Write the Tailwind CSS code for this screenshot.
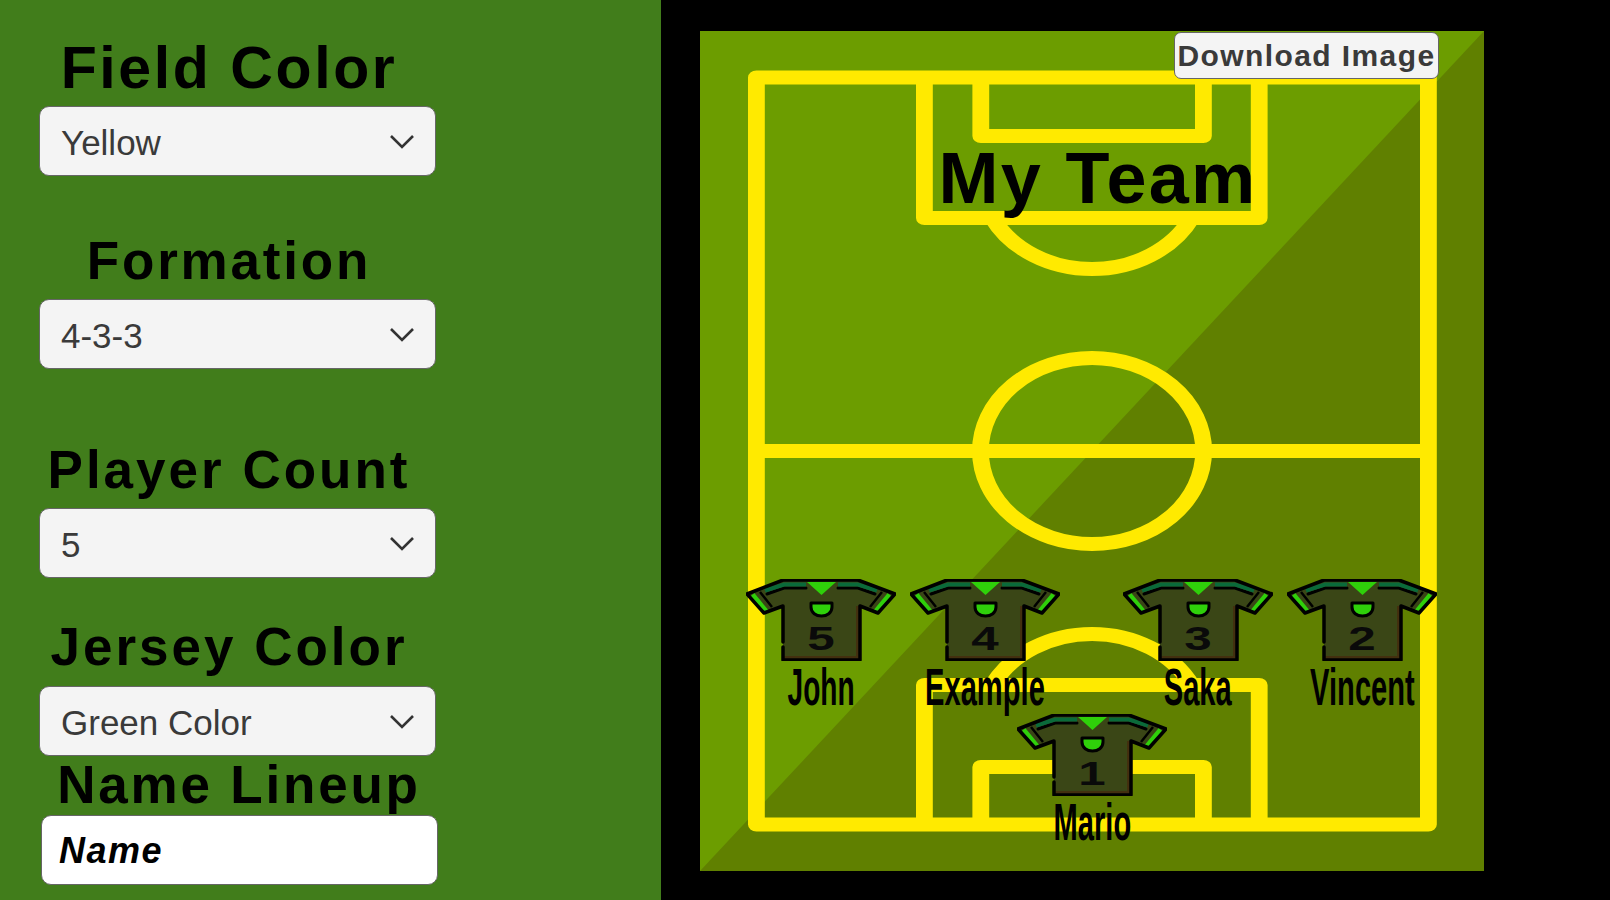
<!DOCTYPE html>
<html lang="en">
<head>
  <meta charset="UTF-8">
  <title>Lineup Builder</title>
  <script src="https://cdn.jsdelivr.net/npm/@tailwindcss/browser@4"></script>
</head>
<body class="h-screen overflow-hidden bg-black font-['Liberation_Sans',Arial,sans-serif]">

  <!-- Shared jersey drawing -->
  <svg class="hidden">
    <symbol id="jersey" viewBox="0 0 150 82">
      <path d="M37 1H112L149 15L132 33L114 27V81H37V27L18 33L1 15Z" fill="#3a4616"/>
      <path d="M110 27H114V81H37V77H110Z" fill="#43300f"/>
      <path d="M61 3H90L75.500 16Z" fill="#2fd00a"/>
      <path d="M21 15L38 9H60M92 9H112L129 15" fill="none" stroke="#000" stroke-width="3" stroke-linecap="round"/>
      <path d="M19 11.500L38 5.500H60M92 5.500H112L131 11.500" fill="none" stroke="#0a6a3a" stroke-width="4"/>
      <path d="M6 16L20 33M144 16L130 33" stroke="#2fd00a" stroke-width="6"/>
      <path d="M14 13L26 28M136 13L124 28" stroke="#000" stroke-width="2.500"/>
      <path d="M37 63V27L18 34L1 15L37 1H112L149 15L132 34L114 27V81H37V68" fill="none" stroke="#000" stroke-width="3.500" stroke-linejoin="round" stroke-linecap="round"/>
      <path d="M65 24H86V28C86 34 81 37 75.500 37C70 37 65 34 65 28Z" fill="#2fd00a" stroke="#000" stroke-width="3" stroke-linejoin="round"/>
    </symbol>
  </svg>

  <div class="flex h-full">
    <!-- Left settings panel -->
    <div class="w-[661px] h-full shrink-0 bg-[#417d1b] pl-[39px] pt-[38px]">
      <div class="w-[380px] h-[60px] text-center text-[59px] leading-[60px] font-bold tracking-[2.6px] text-black whitespace-nowrap">Field Color</div>
      <div class="relative w-[397px] h-[70px] mt-[8px]">
        <select class="w-full h-full appearance-none rounded-[10px] border border-[#666] bg-[#f4f4f4] pl-[21px] pt-[5px] text-[35px] text-[#3a3a3a]"><option>Yellow</option></select>
        <svg class="absolute right-[22px] top-[29px] w-[24px] h-[14px]" viewBox="0 0 24 14" fill="none" stroke="#333" stroke-width="2.6"><path d="M1 1L12 12L23 1"/></svg>
      </div>

      <div class="w-[380px] h-[60px] mt-[55px] text-center text-[53px] leading-[60px] font-bold tracking-[2.8px] text-black whitespace-nowrap">Formation</div>
      <div class="relative w-[397px] h-[70px] mt-[8px]">
        <select class="w-full h-full appearance-none rounded-[10px] border border-[#666] bg-[#f4f4f4] pl-[21px] pt-[5px] text-[35px] text-[#3a3a3a]"><option>4-3-3</option></select>
        <svg class="absolute right-[22px] top-[29px] w-[24px] h-[14px]" viewBox="0 0 24 14" fill="none" stroke="#333" stroke-width="2.6"><path d="M1 1L12 12L23 1"/></svg>
      </div>

      <div class="w-[380px] h-[60px] mt-[71px] text-center text-[53px] leading-[60px] font-bold tracking-[3px] text-black whitespace-nowrap">Player Count</div>
      <div class="relative w-[397px] h-[70px] mt-[8px]">
        <select class="w-full h-full appearance-none rounded-[10px] border border-[#666] bg-[#f4f4f4] pl-[21px] pt-[5px] text-[35px] text-[#3a3a3a]"><option>5</option></select>
        <svg class="absolute right-[22px] top-[29px] w-[24px] h-[14px]" viewBox="0 0 24 14" fill="none" stroke="#333" stroke-width="2.6"><path d="M1 1L12 12L23 1"/></svg>
      </div>

      <div class="w-[380px] h-[60px] mt-[39px] text-center text-[53px] leading-[60px] font-bold tracking-[3px] text-black whitespace-nowrap">Jersey Color</div>
      <div class="relative w-[397px] h-[70px] mt-[9px]">
        <select class="w-full h-full appearance-none rounded-[10px] border border-[#666] bg-[#f4f4f4] pl-[21px] pt-[5px] text-[35px] text-[#3a3a3a]"><option>Green Color</option></select>
        <svg class="absolute right-[22px] top-[29px] w-[24px] h-[14px]" viewBox="0 0 24 14" fill="none" stroke="#333" stroke-width="2.6"><path d="M1 1L12 12L23 1"/></svg>
      </div>

      <div class="w-[400px] h-[60px] -mt-px text-center text-[53px] leading-[60px] font-bold tracking-[2.8px] text-black whitespace-nowrap">Name Lineup</div>
      <input type="text" placeholder="Name" class="block w-[397px] h-[70px] ml-[2px] rounded-[10px] border border-[#666] bg-white pl-[17px] pt-[2px] text-[36px] font-bold italic tracking-[1.5px] placeholder:text-black">
    </div>

    <!-- Pitch panel -->
    <div class="flex-1 bg-black pl-[39px] pt-[31px]">
      <div class="relative w-[784px] h-[840px] bg-[#6c9d00]">
        <svg class="absolute inset-0 w-full h-full" viewBox="0 0 784 840">
          <polygon points="784,0 784,840 0,840" fill="#608000"/>
        </svg>
        <!-- Pitch lines: the x axis is stretched 1.2x -->
        <svg class="absolute inset-0 w-full h-full" viewBox="0 0 653.33 840" preserveAspectRatio="none" fill="none" stroke="#ffea00" stroke-width="14" stroke-linejoin="round">
          <path d="M243.7 187A93 93 0 0 0 409.7 187"/>
          <path d="M243.7 654A93 93 0 0 1 409.7 654"/>
          <rect x="47" y="46.500" width="560" height="747"/>
          <path d="M47 420H607"/>
          <circle cx="326.700" cy="420" r="93"/>
          <path d="M187 47V187H466V47"/>
          <path d="M234 47V105H419.500V47"/>
          <path d="M187 794V654H466V794"/>
          <path d="M234 794V736H419.500V794"/>
        </svg>

        <button class="absolute left-[474px] top-[1px] w-[265px] h-[47px] rounded-[7px] border border-[#666] bg-[#f4f4f4] pt-[1px] text-[30px] leading-none font-bold tracking-[1.4px] text-[#3a3a3a] whitespace-nowrap">Download Image</button>

        <div class="absolute left-[6px] top-[107px] w-full h-[80px] text-center text-[72px] leading-[80px] font-bold tracking-[2.3px] text-black">My Team</div>

        <!-- Players -->
        <div class="absolute left-[46px] top-[548px] w-[150px] flex flex-col items-center">
          <div class="relative w-[150px] h-[82px]">
            <svg class="w-[150px] h-[82px]"><use href="#jersey"/></svg>
            <span class="absolute inset-x-0 top-[40px] text-center text-[34px] leading-[38px] font-bold text-[#0a0a0a] scale-x-[1.45]">5</span>
          </div>
          <div class="h-[56px] -mt-[2px] text-[52px] leading-[56px] font-bold text-black scale-x-[0.54] whitespace-nowrap">John</div>
        </div>
        <div class="absolute left-[210px] top-[548px] w-[150px] flex flex-col items-center">
          <div class="relative w-[150px] h-[82px]">
            <svg class="w-[150px] h-[82px]"><use href="#jersey"/></svg>
            <span class="absolute inset-x-0 top-[40px] text-center text-[34px] leading-[38px] font-bold text-[#0a0a0a] scale-x-[1.45]">4</span>
          </div>
          <div class="h-[56px] -mt-[2px] text-[52px] leading-[56px] font-bold text-black scale-x-[0.56] whitespace-nowrap">Example</div>
        </div>
        <div class="absolute left-[423px] top-[548px] w-[150px] flex flex-col items-center">
          <div class="relative w-[150px] h-[82px]">
            <svg class="w-[150px] h-[82px]"><use href="#jersey"/></svg>
            <span class="absolute inset-x-0 top-[40px] text-center text-[34px] leading-[38px] font-bold text-[#0a0a0a] scale-x-[1.45]">3</span>
          </div>
          <div class="h-[56px] -mt-[2px] text-[52px] leading-[56px] font-bold text-black scale-x-[0.56] whitespace-nowrap">Saka</div>
        </div>
        <div class="absolute left-[587px] top-[548px] w-[150px] flex flex-col items-center">
          <div class="relative w-[150px] h-[82px]">
            <svg class="w-[150px] h-[82px]"><use href="#jersey"/></svg>
            <span class="absolute inset-x-0 top-[40px] text-center text-[34px] leading-[38px] font-bold text-[#0a0a0a] scale-x-[1.45]">2</span>
          </div>
          <div class="h-[56px] -mt-[2px] text-[52px] leading-[56px] font-bold text-black scale-x-[0.56] whitespace-nowrap">Vincent</div>
        </div>
        <div class="absolute left-[317px] top-[683px] w-[150px] flex flex-col items-center">
          <div class="relative w-[150px] h-[82px]">
            <svg class="w-[150px] h-[82px]"><use href="#jersey"/></svg>
            <span class="absolute inset-x-0 top-[40px] text-center text-[34px] leading-[38px] font-bold text-[#0a0a0a] scale-x-[1.45]">1</span>
          </div>
          <div class="h-[56px] -mt-[2px] text-[52px] leading-[56px] font-bold text-black scale-x-[0.56] whitespace-nowrap">Mario</div>
        </div>
      </div>
    </div>
  </div>

</body>
</html>
